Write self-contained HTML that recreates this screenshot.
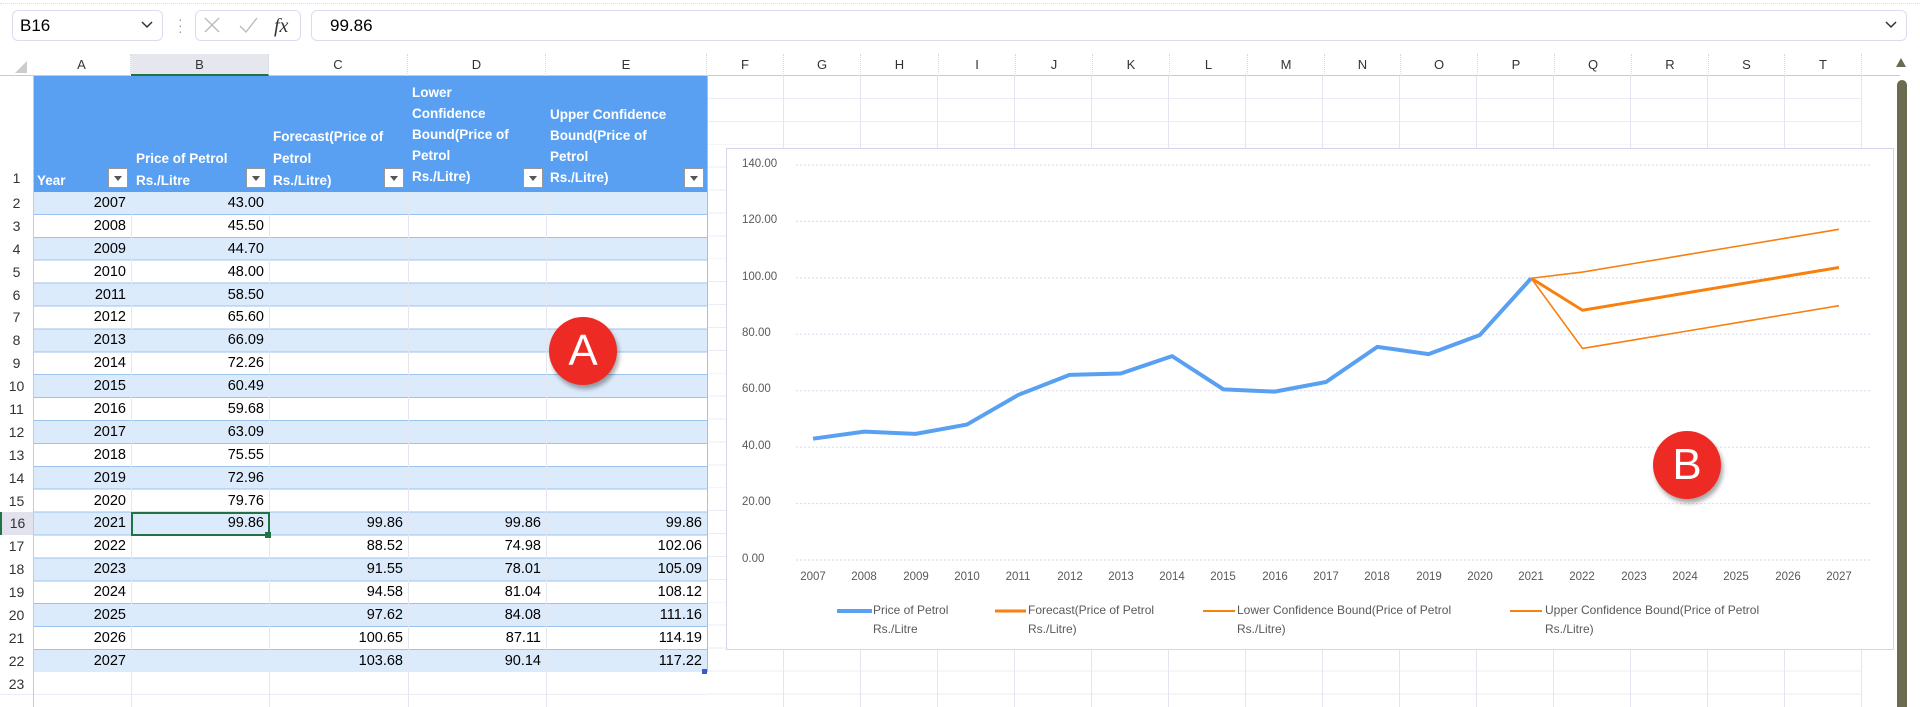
<!DOCTYPE html>
<html><head><meta charset="utf-8"><style>
*{margin:0;padding:0;box-sizing:border-box}
body{width:1920px;height:707px;overflow:hidden;background:#fff;font-family:"Liberation Sans",Arial,sans-serif;position:relative;color:#000}
.abs{position:absolute}
.box{position:absolute;border:1px solid #dcdcf0;border-radius:6px;background:#fff}
.colh{position:absolute;top:54px;height:22px;font-size:13px;color:#333;text-align:center;line-height:22px;border-right:1px dotted #d6d6ea}
.hd{position:absolute;color:#fff;font-weight:bold;font-size:13.5px;line-height:22px}
.dd{position:absolute;width:20px;height:20px;background:#fff;border:1px solid #999;top:168px}
.dd:after{content:"";position:absolute;left:5px;top:7px;border-left:4px solid transparent;border-right:4px solid transparent;border-top:5px solid #555}
.lg{position:absolute;font-size:12px;color:#595959;line-height:19px}
.yl{position:absolute;left:742px;font-size:11.5px;color:#595959}
.xl{position:absolute;top:571px;font-size:11.5px;color:#595959;width:40px;text-align:center}
.r{position:relative;height:22.9px;line-height:22.9px}.r span{position:absolute;font-size:14.5px;text-align:right}.r .n{left:0;width:33px;text-align:center;color:#333;font-size:14px}.r .a{left:33px;width:93px}.r .b{left:131px;width:133px}.r .c{left:269px;width:134px}.r .d{left:408px;width:133px}.r .e{left:546px;width:156px}
</style></head><body>
<div class="abs" style="left:0;top:0;width:1920px;height:4px;border-bottom:1px dotted #dcdcf0"></div>
<div class="box" style="left:12px;top:10px;width:151px;height:31px"></div>
<div class="abs" style="left:20px;top:16px;font-size:17px">B16</div>
<svg class="abs" style="left:140px;top:20px" width="14" height="10"><path d="M2 2l5 5 5-5" fill="none" stroke="#333" stroke-width="1.5"/></svg>
<div class="abs" style="left:178px;top:16px;color:#999;font-size:14px;line-height:6px">·<br>·<br>·</div>
<div class="box" style="left:195px;top:10px;width:106px;height:31px"></div>
<svg class="abs" style="left:202px;top:15px" width="95" height="22"><path d="M3 3l14 14M17 3L3 17" stroke="#bbb" stroke-width="1.4"/><path d="M38 11l6 6 11-14" stroke="#bbb" stroke-width="1.4" fill="none"/><text x="72" y="17" font-family="Liberation Serif" font-style="italic" font-size="20" fill="#333">fx</text></svg>
<div class="box" style="left:311px;top:10px;width:1596px;height:31px"></div>
<div class="abs" style="left:330px;top:16px;font-size:17px">99.86</div>
<svg class="abs" style="left:1884px;top:20px" width="14" height="10"><path d="M2 2l5 5 5-5" fill="none" stroke="#333" stroke-width="1.5"/></svg>

<div class="abs" style="left:0;top:54px;width:1900px;height:22px;border-bottom:1px solid #c8c8d8"></div>
<svg class="abs" style="left:14px;top:60px" width="14" height="14"><path d="M13 1V13H1z" fill="#ccc"/></svg>
<div class="colh" style="left:33px;width:98px">A</div>
<div class="colh" style="left:131px;width:138px;background:#e6e6ef;border-bottom:2px solid #217346">B</div>
<div class="colh" style="left:269px;width:139px">C</div>
<div class="colh" style="left:408px;width:138px">D</div>
<div class="colh" style="left:546px;width:161px">E</div>
<div class="colh" style="left:707px;width:77px">F</div><div class="colh" style="left:784px;width:77px">G</div><div class="colh" style="left:861px;width:78px">H</div><div class="colh" style="left:939px;width:77px">I</div><div class="colh" style="left:1016px;width:77px">J</div><div class="colh" style="left:1093px;width:77px">K</div><div class="colh" style="left:1170px;width:78px">L</div><div class="colh" style="left:1248px;width:77px">M</div><div class="colh" style="left:1325px;width:76px">N</div><div class="colh" style="left:1401px;width:77px">O</div><div class="colh" style="left:1478px;width:77px">P</div><div class="colh" style="left:1555px;width:77px">Q</div><div class="colh" style="left:1632px;width:77px">R</div><div class="colh" style="left:1709px;width:76px">S</div><div class="colh" style="left:1785px;width:77px">T</div>

<div class="abs" style="left:707px;top:76px;width:1155px;height:631px;background:repeating-linear-gradient(90deg,transparent 0 76px,#e4e4f2 76px 77px),repeating-linear-gradient(180deg,transparent 0 22px,#ececf6 22px 22.9px)"></div>
<div class="abs" style="left:0;top:672px;width:707px;height:35px;background:repeating-linear-gradient(180deg,transparent 0 22px,#ececf6 22px 22.9px)"></div>

<div class="abs" style="left:33px;top:76px;width:674px;height:116px;background:#5aa0f2"></div>
<div class="abs" style="left:0;top:170px;width:33px;text-align:center;font-size:14px;color:#333">1</div>
<div class="hd" style="left:37px;top:170px">Year</div>
<div class="hd" style="left:136px;top:148px">Price of Petrol<br>Rs./Litre</div>
<div class="hd" style="left:273px;top:126px">Forecast(Price of<br>Petrol<br>Rs./Litre)</div>
<div class="hd" style="left:412px;top:82px;line-height:21px">Lower<br>Confidence<br>Bound(Price of<br>Petrol<br>Rs./Litre)</div>
<div class="hd" style="left:550px;top:104px;line-height:21px">Upper Confidence<br>Bound(Price of<br>Petrol<br>Rs./Litre)</div>
<div class="dd" style="left:108px"></div><div class="dd" style="left:246px"></div><div class="dd" style="left:384px"></div><div class="dd" style="left:523px"></div><div class="dd" style="left:684px"></div>

<div class="abs" style="left:33px;top:192px;width:674px;height:480px;background:repeating-linear-gradient(180deg,#dcebfb 0 21.9px,#9cc3ec 21.9px 22.9px,#fff 22.9px 44.8px,#9cc3ec 44.8px 45.8px)"></div>
<div class="abs" style="left:131px;top:192px;width:1px;height:515px;background:#e6e6f2"></div>
<div class="abs" style="left:269px;top:192px;width:1px;height:515px;background:#e6e6f2"></div>
<div class="abs" style="left:408px;top:192px;width:1px;height:515px;background:#e6e6f2"></div>
<div class="abs" style="left:546px;top:192px;width:1px;height:515px;background:#e6e6f2"></div>
<div class="abs" style="left:707px;top:76px;width:1px;height:596px;background:#9cc3ec"></div>

<div style="position:absolute;left:0;top:192px;width:707px">
<div class="r"><span class="n">2</span><span class="a">2007</span><span class="b">43.00</span></div>
<div class="r"><span class="n">3</span><span class="a">2008</span><span class="b">45.50</span></div>
<div class="r"><span class="n">4</span><span class="a">2009</span><span class="b">44.70</span></div>
<div class="r"><span class="n">5</span><span class="a">2010</span><span class="b">48.00</span></div>
<div class="r"><span class="n">6</span><span class="a">2011</span><span class="b">58.50</span></div>
<div class="r"><span class="n">7</span><span class="a">2012</span><span class="b">65.60</span></div>
<div class="r"><span class="n">8</span><span class="a">2013</span><span class="b">66.09</span></div>
<div class="r"><span class="n">9</span><span class="a">2014</span><span class="b">72.26</span></div>
<div class="r"><span class="n">10</span><span class="a">2015</span><span class="b">60.49</span></div>
<div class="r"><span class="n">11</span><span class="a">2016</span><span class="b">59.68</span></div>
<div class="r"><span class="n">12</span><span class="a">2017</span><span class="b">63.09</span></div>
<div class="r"><span class="n">13</span><span class="a">2018</span><span class="b">75.55</span></div>
<div class="r"><span class="n">14</span><span class="a">2019</span><span class="b">72.96</span></div>
<div class="r"><span class="n">15</span><span class="a">2020</span><span class="b">79.76</span></div>
<div class="r"><span class="n" style="background:#e2e2ee;border-left:2px solid #217346">16</span><span class="a">2021</span><span class="b">99.86</span><span class="c">99.86</span><span class="d">99.86</span><span class="e">99.86</span></div>
<div class="r"><span class="n">17</span><span class="a">2022</span><span class="c">88.52</span><span class="d">74.98</span><span class="e">102.06</span></div>
<div class="r"><span class="n">18</span><span class="a">2023</span><span class="c">91.55</span><span class="d">78.01</span><span class="e">105.09</span></div>
<div class="r"><span class="n">19</span><span class="a">2024</span><span class="c">94.58</span><span class="d">81.04</span><span class="e">108.12</span></div>
<div class="r"><span class="n">20</span><span class="a">2025</span><span class="c">97.62</span><span class="d">84.08</span><span class="e">111.16</span></div>
<div class="r"><span class="n">21</span><span class="a">2026</span><span class="c">100.65</span><span class="d">87.11</span><span class="e">114.19</span></div>
<div class="r"><span class="n">22</span><span class="a">2027</span><span class="c">103.68</span><span class="d">90.14</span><span class="e">117.22</span></div>
<div class="r"><span class="n">23</span></div>
</div>
<div class="abs" style="left:33px;top:76px;width:1px;height:631px;background:#c8c8d8"></div>
<div class="abs" style="left:131px;top:512px;width:139px;height:24px;border:2px solid #217346"></div>
<div class="abs" style="left:265px;top:532px;width:6px;height:6px;background:#217346"></div>
<div class="abs" style="left:702px;top:669px;width:5px;height:5px;background:#3a5bd0"></div>

<div class="abs" style="left:549px;top:317px;width:68px;height:68px;border-radius:50%;background:#ee2a24;box-shadow:2px 4px 5px rgba(0,0,0,.35);color:#fff;font-size:44px;text-align:center;line-height:68px">A</div>

<div class="abs" style="left:726px;top:148px;width:1168px;height:502px;background:#fff;border:1px solid #d4d4ee"></div>
<svg class="abs" style="left:0;top:0" width="1920" height="707">
<g stroke="#d8d8ee" stroke-dasharray="2 2" stroke-width="1">
<path d="M796 165H1870M796 221.4H1870M796 277.9H1870M796 334.3H1870M796 390.7H1870M796 447.1H1870M796 503.6H1870M796 560H1870"/>
</g>
<g transform="translate(813,560) scale(51.3,-2.8214)" fill="none" stroke-linejoin="round">
<polyline vector-effect="non-scaling-stroke" stroke="#5aa0f2" stroke-width="4" points="0,43 1,45.5 2,44.7 3,48 4,58.5 5,65.6 6,66.09 7,72.26 8,60.49 9,59.68 10,63.09 11,75.55 12,72.96 13,79.76 14,99.86"/>
<polyline vector-effect="non-scaling-stroke" stroke="#f7800f" stroke-width="3" points="14,99.86 15,88.52 16,91.55 17,94.58 18,97.62 19,100.65 20,103.68"/>
<polyline vector-effect="non-scaling-stroke" stroke="#f7800f" stroke-width="1.6" points="14,99.86 15,74.98 16,78.01 17,81.04 18,84.08 19,87.11 20,90.14"/>
<polyline vector-effect="non-scaling-stroke" stroke="#f7800f" stroke-width="1.6" points="14,99.86 15,102.06 16,105.09 17,108.12 18,111.16 19,114.19 20,117.22"/>
</g>
<path d="M837 611H872" stroke="#5aa0f2" stroke-width="4"/>
<path d="M995 611H1026" stroke="#f7800f" stroke-width="3"/>
<path d="M1203 611H1235" stroke="#f7800f" stroke-width="2"/>
<path d="M1510 611H1542" stroke="#f7800f" stroke-width="2"/>
</svg>
<div class="yl" style="top:158px">140.00</div><div class="yl" style="top:214px">120.00</div><div class="yl" style="top:271px">100.00</div><div class="yl" style="top:327px">80.00</div><div class="yl" style="top:383px">60.00</div><div class="yl" style="top:440px">40.00</div><div class="yl" style="top:496px">20.00</div><div class="yl" style="top:553px">0.00</div>
<div class="xl" style="left:793px">2007</div><div class="xl" style="left:844px">2008</div><div class="xl" style="left:896px">2009</div><div class="xl" style="left:947px">2010</div><div class="xl" style="left:998px">2011</div><div class="xl" style="left:1050px">2012</div><div class="xl" style="left:1101px">2013</div><div class="xl" style="left:1152px">2014</div><div class="xl" style="left:1203px">2015</div><div class="xl" style="left:1255px">2016</div><div class="xl" style="left:1306px">2017</div><div class="xl" style="left:1357px">2018</div><div class="xl" style="left:1409px">2019</div><div class="xl" style="left:1460px">2020</div><div class="xl" style="left:1511px">2021</div><div class="xl" style="left:1562px">2022</div><div class="xl" style="left:1614px">2023</div><div class="xl" style="left:1665px">2024</div><div class="xl" style="left:1716px">2025</div><div class="xl" style="left:1768px">2026</div><div class="xl" style="left:1819px">2027</div>
<div class="lg" style="left:873px;top:601px">Price of Petrol<br>Rs./Litre</div>
<div class="lg" style="left:1028px;top:601px">Forecast(Price of Petrol<br>Rs./Litre)</div>
<div class="lg" style="left:1237px;top:601px">Lower Confidence Bound(Price of Petrol<br>Rs./Litre)</div>
<div class="lg" style="left:1545px;top:601px">Upper Confidence Bound(Price of Petrol<br>Rs./Litre)</div>

<div class="abs" style="left:1653px;top:431px;width:68px;height:68px;border-radius:50%;background:#ee2a24;box-shadow:2px 4px 5px rgba(0,0,0,.35);color:#fff;font-size:44px;text-align:center;line-height:68px">B</div>

<svg class="abs" style="left:1894px;top:56px" width="14" height="14"><path d="M7 2L12 11H2z" fill="#6b6b52"/></svg>
<div class="abs" style="left:1897px;top:80px;width:10px;height:627px;background:#6b6b52;border-radius:5px 5px 0 0"></div>
</body></html>
